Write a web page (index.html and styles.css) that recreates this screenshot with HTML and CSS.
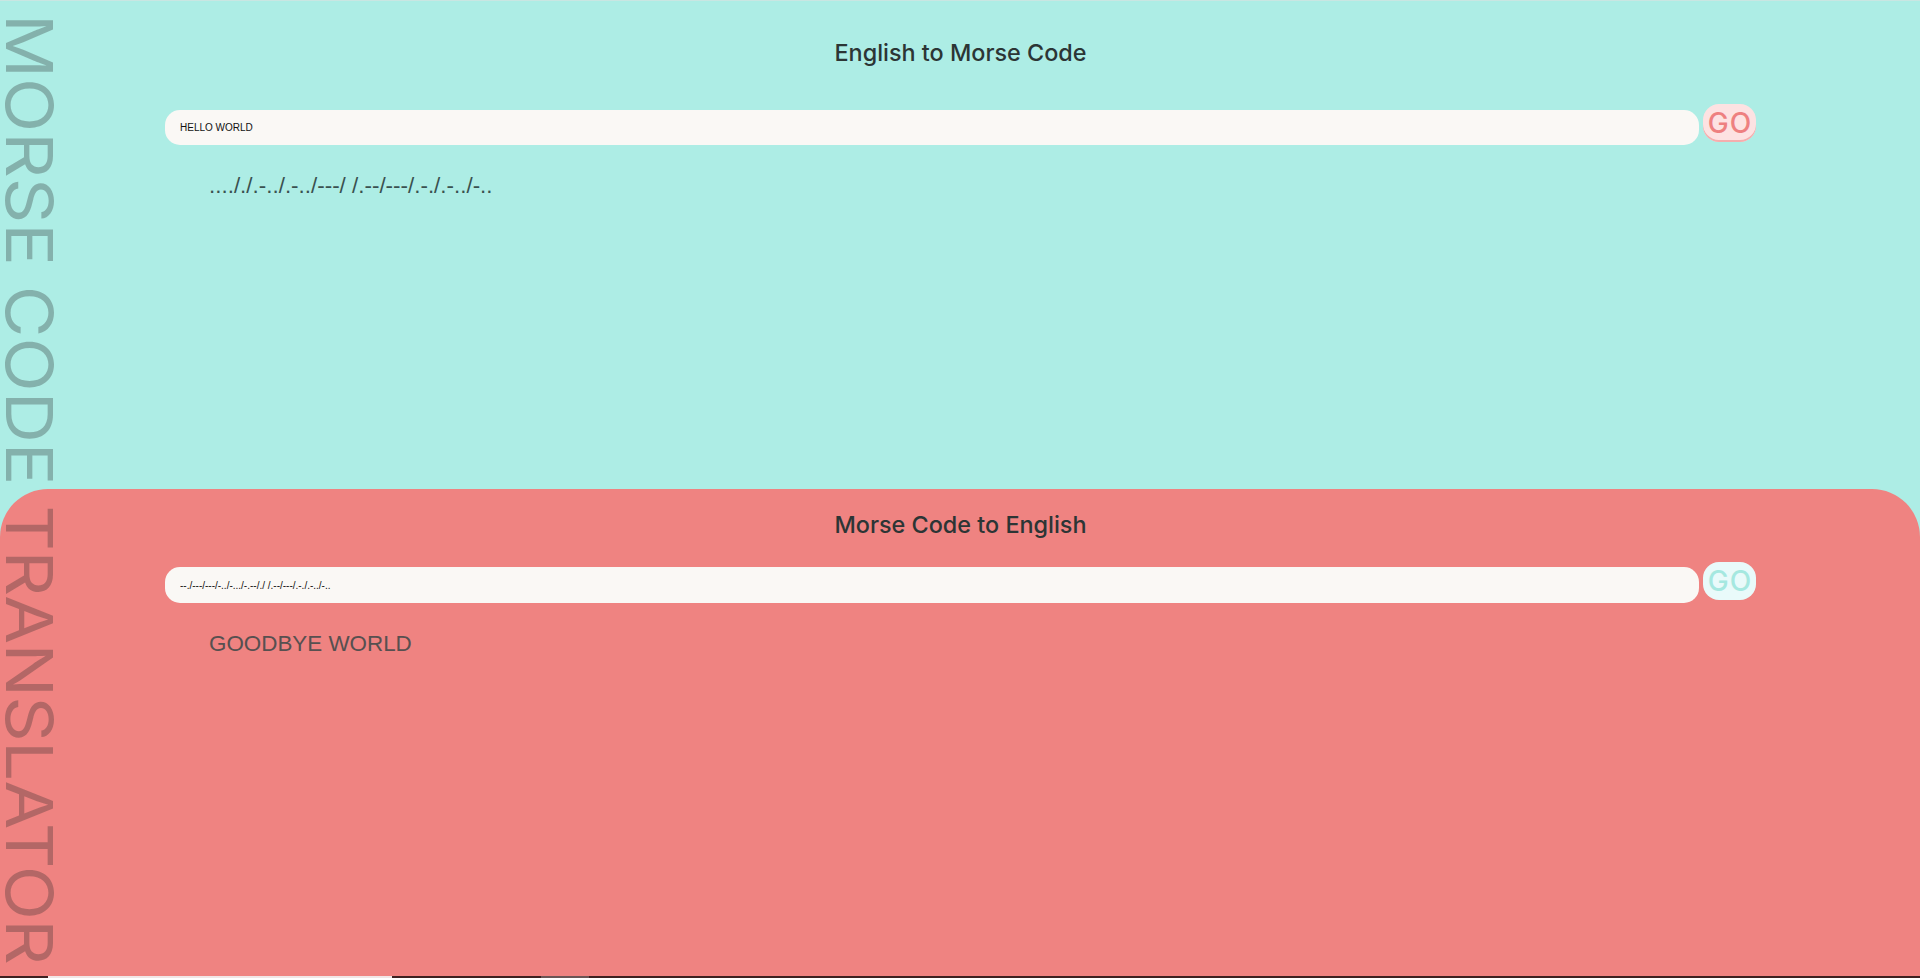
FILE: index.html
```html
<!DOCTYPE html>
<html lang="en">
<head>
<meta charset="utf-8">
<title>Morse Code Translator</title>
<link rel="stylesheet" href="styles.css">
</head>
<body>
<div class="page">
  <h1 class="side-title">MORSE CODE <span class="side-last">TRANSLATOR</span></h1>
  <section class="panel panel-en">
    <h2 class="panel-title">English to Morse Code</h2>
    <div class="row">
      <input class="field" type="text" value="HELLO WORLD">
      <button class="go go-en" type="button">GO</button>
    </div>
    <p class="output">...././.-../.-../---/ /.--/---/.-./.-../-..</p>
  </section>
  <section class="panel panel-morse">
    <h2 class="panel-title">Morse Code to English</h2>
    <div class="row">
      <input class="field" type="text" value="--./---/---/-../-.../-.--/./ /.--/---/.-./.-../-..">
      <button class="go go-morse" type="button">GO</button>
    </div>
    <p class="output">GOODBYE WORLD</p>
  </section>
  <div class="strip">
    <span class="strip-a"></span>
    <span class="strip-b"></span>
    <span class="strip-a2"></span>
    <span class="strip-c"></span>
    <span class="strip-d"></span>
  </div>
</div>
</body>
</html>
```
FILE: styles.css
```css
* { box-sizing: border-box; }
html, body { margin: 0; padding: 0; height: 100%; overflow: hidden; }
body { font-family: "Liberation Sans", Arial, sans-serif; background: #aeeee6; }
.page { position: relative; display: flex; flex-direction: column; height: 978px; overflow: hidden; background: #adede5; }

.side-title {
  position: absolute;
  z-index: 2;
  top: 14px;
  left: 0;
  margin: 0;
  writing-mode: vertical-rl;
  font-family: Inter, "Noto Sans", sans-serif;
  font-size: 65px;
  line-height: 59px;
  font-weight: 440;
  letter-spacing: 0;
  white-space: nowrap;
  color: rgba(40, 40, 40, 0.3);
  transform: scaleY(1.09);
  transform-origin: top left;
}
.side-last { letter-spacing: -0.6px; }

.panel { padding-left: 165px; padding-right: 164px; }
.panel-en { height: 489px; padding-top: 38px; border-top: 1px solid #c9e6e2; }
.panel-morse { flex: 1; padding-top: 22px; background: #ef8381; border-radius: 48px 48px 0 0; }

.panel-title {
  margin: 0;
  height: 28px;
  line-height: 28px;
  text-align: center;
  font-family: Inter, "Noto Sans", sans-serif;
  font-size: 23.4px;
  font-weight: 500;
  color: #2c3535;
}
.panel-en .row { margin-top: 37px; }
.panel-morse .row { margin-top: 23px; }

.row { display: flex; align-items: flex-start; gap: 4px; }
.field {
  flex: 1;
  height: 35px;
  margin-top: 6px;
  padding: 0 15px;
  border: 0;
  border-radius: 15px;
  background: #faf8f5;
  font-family: "Liberation Sans", Arial, sans-serif;
  font-size: 10px;
  color: #111;
}
.panel-morse .field { margin-top: 5px; height: 36px; }

.go {
  width: 53px;
  height: 38px;
  padding: 0 0 0 1px;
  border: 0;
  border-radius: 16px;
  font-family: Inter, "Noto Sans", sans-serif;
  font-size: 28px;
  font-weight: 450;
  letter-spacing: 1px;
  line-height: 38px;
  cursor: pointer;
}
.go-en { background: #fde2e2; color: #ee8080; box-shadow: inset 0 -2px 0 #f5aeae; }
.go-morse { background: #e9fafa; color: #a5e8e0; }

.output {
  margin: 0;
  padding-left: 44px;
  font-size: 22.4px;
  line-height: 28px;
}
.panel-en .output { margin-top: 27px; color: #3a5150; }
.panel-morse .output { margin-top: 27px; color: #575050; }

.strip { display: flex; height: 2px; background: #3d2121; }
.strip span { display: block; height: 2px; }
.strip-a { width: 48px; }
.strip-b { width: 344px; background: #f1e6e6; }
.strip-a2 { width: 149px; }
.strip-c { width: 48px; background: #6b5555; }
.strip-d { flex: 1; }
```
